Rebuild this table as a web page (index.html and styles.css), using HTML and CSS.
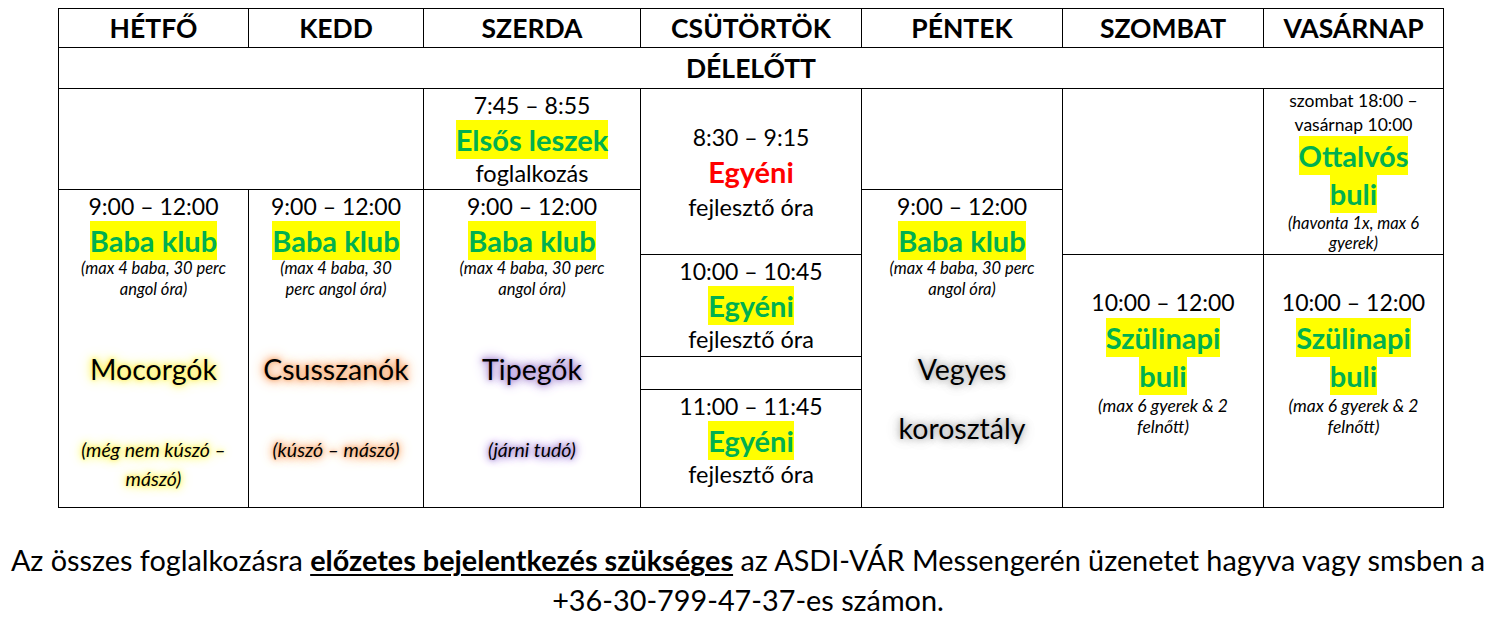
FILE: index.html
```html
<!DOCTYPE html>
<html lang="hu">
<head>
<meta charset="utf-8">
<title>Órarend</title>
<link rel="stylesheet" href="styles.css">
</head>
<body>
<div class="page">
  <div class="schedule">
    <div class="cell head">HÉTFŐ</div>
    <div class="cell head">KEDD</div>
    <div class="cell head">SZERDA</div>
    <div class="cell head">CSÜTÖRTÖK</div>
    <div class="cell head">PÉNTEK</div>
    <div class="cell head">SZOMBAT</div>
    <div class="cell head">VASÁRNAP</div>

    <div class="cell section">DÉLELŐTT</div>

    <div class="cell mon-tue-early"></div>

    <div class="cell wed-early">
      <div class="time">7:45 – 8:55</div>
      <div class="title"><span class="hl">Elsős leszek</span></div>
      <div class="text">foglalkozás</div>
    </div>

    <div class="cell thu-early">
      <div class="time">8:30 – 9:15</div>
      <div class="title red">Egyéni</div>
      <div class="text">fejlesztő óra</div>
    </div>

    <div class="cell fri-early"></div>
    <div class="cell sat-early"></div>

    <div class="cell sun-early">
      <div class="small">szombat 18:00 –</div>
      <div class="small">vasárnap 10:00</div>
      <div class="title multi"><span class="hl">Ottalvós</span><br><span class="hl">buli</span></div>
      <div class="note tight">(havonta 1x, max 6<br>gyerek)</div>
    </div>

    <div class="cell mon-main">
      <div class="time">9:00 – 12:00</div>
      <div class="title"><span class="hl">Baba klub</span></div>
      <div class="note">(max 4 baba, 30 perc<br>angol óra)</div>
      <div class="group glow-yellow">Mocorgók</div>
      <div class="age glow-yellow">(még nem kúszó –<br>mászó)</div>
    </div>

    <div class="cell tue-main">
      <div class="time">9:00 – 12:00</div>
      <div class="title"><span class="hl">Baba klub</span></div>
      <div class="note">(max 4 baba, 30<br>perc angol óra)</div>
      <div class="group glow-orange">Csusszanók</div>
      <div class="age glow-orange">(kúszó – mászó)</div>
    </div>

    <div class="cell wed-main">
      <div class="time">9:00 – 12:00</div>
      <div class="title"><span class="hl">Baba klub</span></div>
      <div class="note">(max 4 baba, 30 perc<br>angol óra)</div>
      <div class="group glow-purple">Tipegők</div>
      <div class="age glow-purple">(járni tudó)</div>
    </div>

    <div class="cell thu-10">
      <div class="time">10:00 – 10:45</div>
      <div class="title"><span class="hl">Egyéni</span></div>
      <div class="text">fejlesztő óra</div>
    </div>

    <div class="cell fri-main">
      <div class="time">9:00 – 12:00</div>
      <div class="title"><span class="hl">Baba klub</span></div>
      <div class="note">(max 4 baba, 30 perc<br>angol óra)</div>
      <div class="group mixed glow-gray">Vegyes<br>korosztály</div>
    </div>

    <div class="cell sat-late party">
      <div class="time">10:00 – 12:00</div>
      <div class="title multi"><span class="hl">Szülinapi</span><br><span class="hl">buli</span></div>
      <div class="note big">(max 6 gyerek &amp; 2<br>felnőtt)</div>
    </div>

    <div class="cell sun-late party">
      <div class="time">10:00 – 12:00</div>
      <div class="title multi"><span class="hl">Szülinapi</span><br><span class="hl">buli</span></div>
      <div class="note big">(max 6 gyerek &amp; 2<br>felnőtt)</div>
    </div>

    <div class="cell thu-gap"></div>

    <div class="cell thu-11">
      <div class="time">11:00 – 11:45</div>
      <div class="title"><span class="hl">Egyéni</span></div>
      <div class="text">fejlesztő óra</div>
    </div>
  </div>

  <p class="footer">Az összes foglalkozásra <strong class="must">előzetes bejelentkezés szükséges</strong> az ASDI-VÁR Messengerén üzenetet hagyva vagy smsben a<br>+36-30-799-47-37-es számon.</p>
</div>
</body>
</html>
```

FILE: styles.css
```css
html, body {
  margin: 0;
  padding: 0;
  background: #fff;
}

body {
  font-family: Lato, Carlito, "Open Sans", sans-serif;
  color: #000;
}

.page {
  padding: 8px 0 0 58px;
}

.schedule {
  display: grid;
  width: 1386px;
  box-sizing: border-box;
  padding: 1px;
  gap: 1px;
  background: #000;
  grid-template-columns: 189px 174px 216px 220px 200px 200px 179px;
  grid-template-rows: 38px 40px 100px 64px 101px 32px 117px;
}

.cell {
  background: #fff;
  text-align: center;
  white-space: nowrap;
}

.head,
.section {
  font-weight: 700;
  font-size: 26.5px;
  display: flex;
  align-items: center;
  justify-content: center;
}

.section {
  grid-column: 1 / -1;
}

/* placement */
.mon-tue-early { grid-column: 1 / 3; grid-row: 3; }
.wed-early     { grid-column: 3; grid-row: 3; }
.thu-early     { grid-column: 4; grid-row: 3 / 5; display: flex; flex-direction: column; justify-content: center; }
.fri-early     { grid-column: 5; grid-row: 3; }
.sat-early     { grid-column: 6; grid-row: 3 / 5; }
.sun-early     { grid-column: 7; grid-row: 3 / 5; }
.mon-main      { grid-column: 1; grid-row: 4 / 8; }
.tue-main      { grid-column: 2; grid-row: 4 / 8; }
.wed-main      { grid-column: 3; grid-row: 4 / 8; }
.thu-10        { grid-column: 4; grid-row: 5; }
.fri-main      { grid-column: 5; grid-row: 4 / 8; }
.sat-late      { grid-column: 6; grid-row: 5 / 8; }
.sun-late      { grid-column: 7; grid-row: 5 / 8; }
.thu-gap       { grid-column: 4; grid-row: 6; }
.thu-11        { grid-column: 4; grid-row: 7; }

/* text styles */
.time {
  font-size: 23px;
  line-height: 33px;
}

.text {
  font-size: 23.5px;
  line-height: 33px;
}

.thu-early .time,
.thu-early .text {
  line-height: 34px;
}

.title {
  font-weight: 700;
  font-size: 29px;
  line-height: 35px;
  color: #00b050;
}

.title.multi {
  line-height: 38px;
}

.title.red {
  color: #ff0000;
  line-height: 36px;
}

.hl {
  background: #ffff00;
  padding: 2px 0 2px;
}

.note {
  font-style: italic;
  font-size: 16.5px;
  line-height: 21px;
}

.note.tight {
  line-height: 20px;
}

.note.big {
  font-size: 17.5px;
}

.small {
  font-size: 17.5px;
  line-height: 24px;
}

.party {
  padding-top: 31px;
}

.group {
  font-size: 28.5px;
  line-height: 40px;
  margin-top: 49px;
}

.group.mixed {
  line-height: 59px;
  margin-top: 40px;
}

.age {
  font-style: italic;
  font-size: 19.5px;
  line-height: 29px;
  margin-top: 46px;
}

.glow-yellow {
  text-shadow: 0 0 3px #fff36b, 0 0 6px #fff36b, 0 0 9px #fff36b, 0 0 13px #fff59d, 0 0 18px #fffac8;
}

.glow-orange {
  text-shadow: 0 0 3px #f7b07c, 0 0 6px #f7b07c, 0 0 9px #f7b07c, 0 0 13px #f8bd92, 0 0 18px #fbd5b8;
}

.glow-purple {
  text-shadow: 0 0 3px #b59bd9, 0 0 6px #b59bd9, 0 0 9px #b59bd9, 0 0 13px #c3aee2, 0 0 18px #dcd0ef;
}

.glow-gray {
  text-shadow: 0 0 5px #bdbdbd, 0 0 9px #c4c4c4, 0 0 14px #cfcfcf, 0 0 20px #e2e2e2;
}

.footer {
  margin: 32px 0 0 -58px;
  width: 1496px;
  text-align: center;
  font-size: 28.8px;
  line-height: 40px;
  white-space: nowrap;
}

.must {
  text-decoration: underline;
  text-decoration-thickness: 2px;
  text-underline-offset: 3px;
}
```
